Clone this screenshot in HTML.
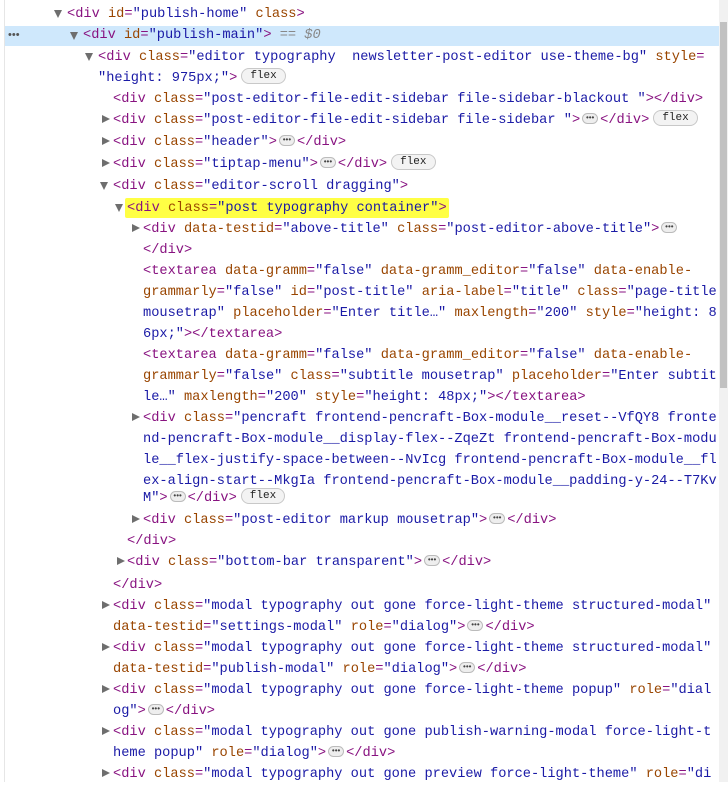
<!DOCTYPE html>
<html><head><meta charset="utf-8"><style>
body{margin:0;width:728px;height:782px;background:#fff;overflow:hidden;position:relative;font-family:"Liberation Mono",monospace;font-size:13.67px}
.l{position:absolute;height:21px;line-height:21px;white-space:pre;color:#881280}
.t{color:#881280}.a{color:#994500}.v{color:#1a1aa6}.g{color:#888;font-style:italic}
.tri{position:absolute;width:0;height:0;border-left:4.5px solid transparent;border-right:4.5px solid transparent;border-top:8px solid #6e6e6e}
.trr{position:absolute;width:0;height:0;border-top:4.5px solid transparent;border-bottom:4.5px solid transparent;border-left:8px solid #6e6e6e}
.dots{display:inline-block;width:16px;height:11px;border:1px solid #bbb;border-radius:7px;background:#eee;vertical-align:middle;margin:0 2px;position:relative;top:-1px;font-family:"Liberation Sans",sans-serif;font-size:8px;line-height:8px;text-align:center;color:#444;box-sizing:border-box}
.fx{display:inline-block;height:16px;line-height:14px;padding:0 8px;border:1px solid #c8c8c8;border-radius:8px;background:#f3f3f3;color:#222;font-family:"Liberation Mono",monospace;font-size:11px;vertical-align:middle;margin-left:4px;position:relative;top:-1px;box-sizing:border-box}
</style></head><body>
<div style="position:absolute;left:0;top:0;width:4px;height:782px;border-right:1px solid #e6e6e6"></div>
<div style="position:absolute;left:5px;top:26px;width:714px;height:20px;background:#cfe8fc"></div>
<div style="position:absolute;left:8px;top:26px;line-height:18px;color:#555;font-family:'Liberation Sans',sans-serif;font-size:11px">•••</div>
<div style="position:absolute;left:719px;top:0;width:9px;height:782px;background:#f1f1f1"></div>
<div style="position:absolute;left:720px;top:22px;width:7px;height:366px;background:#c1c1c1"></div>
<div style="position:absolute;left:125px;top:198px;width:324px;height:20px;background:#ffff44;border-radius:2px"></div>

<div class="tri" style="left:54px;top:10px"></div>
<div class="l" style="left:67px;top:4px">&lt;div <span class="a">id</span>=<span class="v">"publish-home"</span> <span class="a">class</span>&gt;</div>
<div class="tri" style="left:70px;top:32px"></div>
<div class="l" style="left:83px;top:25px">&lt;div <span class="a">id</span>=<span class="v">"publish-main"</span>&gt; <span class="g">== $0</span></div>
<div class="tri" style="left:85px;top:53px"></div>
<div class="l" style="left:98px;top:47px">&lt;div <span class="a">class</span>=<span class="v">"editor typography  newsletter-post-editor use-theme-bg"</span> <span class="a">style</span>=</div>
<div class="l" style="left:98px;top:68px"><span class="v">"height: 975px;"</span>&gt;<span class="fx">flex</span></div>
<div class="l" style="left:113px;top:89px">&lt;div <span class="a">class</span>=<span class="v">"post-editor-file-edit-sidebar file-sidebar-blackout "</span>&gt;&lt;/div&gt;</div>
<div class="trr" style="left:102px;top:115px"></div>
<div class="l" style="left:113px;top:110px">&lt;div <span class="a">class</span>=<span class="v">"post-editor-file-edit-sidebar file-sidebar "</span>&gt;<span class="dots">•••</span>&lt;/div&gt;<span class="fx">flex</span></div>
<div class="trr" style="left:102px;top:137px"></div>
<div class="l" style="left:113px;top:132px">&lt;div <span class="a">class</span>=<span class="v">"header"</span>&gt;<span class="dots">•••</span>&lt;/div&gt;</div>
<div class="trr" style="left:102px;top:159px"></div>
<div class="l" style="left:113px;top:154px">&lt;div <span class="a">class</span>=<span class="v">"tiptap-menu"</span>&gt;<span class="dots">•••</span>&lt;/div&gt;<span class="fx">flex</span></div>
<div class="tri" style="left:100px;top:182px"></div>
<div class="l" style="left:113px;top:176px">&lt;div <span class="a">class</span>=<span class="v">"editor-scroll dragging"</span>&gt;</div>
<div class="tri" style="left:115px;top:204px"></div>
<div class="l" style="left:127px;top:198px">&lt;div <span class="a">class</span>=<span class="v">"post typography container"</span>&gt;</div>
<div class="trr" style="left:132px;top:224px"></div>
<div class="l" style="left:143px;top:219px">&lt;div <span class="a">data-testid</span>=<span class="v">"above-title"</span> <span class="a">class</span>=<span class="v">"post-editor-above-title"</span>&gt;<span class="dots">•••</span></div>
<div class="l" style="left:143px;top:240px">&lt;/div&gt;</div>
<div class="l" style="left:143px;top:261px">&lt;textarea <span class="a">data-gramm</span>=<span class="v">"false"</span> <span class="a">data-gramm_editor</span>=<span class="v">"false"</span> <span class="a">data-enable-</span></div>
<div class="l" style="left:143px;top:282px"><span class="a">grammarly</span>=<span class="v">"false"</span> <span class="a">id</span>=<span class="v">"post-title"</span> <span class="a">aria-label</span>=<span class="v">"title"</span> <span class="a">class</span>=<span class="v">"page-title</span></div>
<div class="l" style="left:143px;top:303px"><span class="v">mousetrap"</span> <span class="a">placeholder</span>=<span class="v">"Enter title…"</span> <span class="a">maxlength</span>=<span class="v">"200"</span> <span class="a">style</span>=<span class="v">"height: 8</span></div>
<div class="l" style="left:143px;top:324px"><span class="v">6px;"</span>&gt;&lt;/textarea&gt;</div>
<div class="l" style="left:143px;top:345px">&lt;textarea <span class="a">data-gramm</span>=<span class="v">"false"</span> <span class="a">data-gramm_editor</span>=<span class="v">"false"</span> <span class="a">data-enable-</span></div>
<div class="l" style="left:143px;top:366px"><span class="a">grammarly</span>=<span class="v">"false"</span> <span class="a">class</span>=<span class="v">"subtitle mousetrap"</span> <span class="a">placeholder</span>=<span class="v">"Enter subtit</span></div>
<div class="l" style="left:143px;top:387px"><span class="v">le…"</span> <span class="a">maxlength</span>=<span class="v">"200"</span> <span class="a">style</span>=<span class="v">"height: 48px;"</span>&gt;&lt;/textarea&gt;</div>
<div class="trr" style="left:132px;top:413px"></div>
<div class="l" style="left:143px;top:408px">&lt;div <span class="a">class</span>=<span class="v">"pencraft frontend-pencraft-Box-module__reset--VfQY8 fronte</span></div>
<div class="l" style="left:143px;top:429px"><span class="v">nd-pencraft-Box-module__display-flex--ZqeZt frontend-pencraft-Box-modu</span></div>
<div class="l" style="left:143px;top:450px"><span class="v">le__flex-justify-space-between--NvIcg frontend-pencraft-Box-module__fl</span></div>
<div class="l" style="left:143px;top:471px"><span class="v">ex-align-start--MkgIa frontend-pencraft-Box-module__padding-y-24--T7Kv</span></div>
<div class="l" style="left:143px;top:488px"><span class="v">M"</span>&gt;<span class="dots">•••</span>&lt;/div&gt;<span class="fx">flex</span></div>
<div class="trr" style="left:132px;top:515px"></div>
<div class="l" style="left:143px;top:510px">&lt;div <span class="a">class</span>=<span class="v">"post-editor markup mousetrap"</span>&gt;<span class="dots">•••</span>&lt;/div&gt;</div>
<div class="l" style="left:127px;top:531px">&lt;/div&gt;</div>
<div class="trr" style="left:117px;top:557px"></div>
<div class="l" style="left:127px;top:552px">&lt;div <span class="a">class</span>=<span class="v">"bottom-bar transparent"</span>&gt;<span class="dots">•••</span>&lt;/div&gt;</div>
<div class="l" style="left:113px;top:575px">&lt;/div&gt;</div>
<div class="trr" style="left:102px;top:601px"></div>
<div class="l" style="left:113px;top:596px">&lt;div <span class="a">class</span>=<span class="v">"modal typography out gone force-light-theme structured-modal"</span></div>
<div class="l" style="left:113px;top:617px"><span class="a">data-testid</span>=<span class="v">"settings-modal"</span> <span class="a">role</span>=<span class="v">"dialog"</span>&gt;<span class="dots">•••</span>&lt;/div&gt;</div>
<div class="trr" style="left:102px;top:643px"></div>
<div class="l" style="left:113px;top:638px">&lt;div <span class="a">class</span>=<span class="v">"modal typography out gone force-light-theme structured-modal"</span></div>
<div class="l" style="left:113px;top:659px"><span class="a">data-testid</span>=<span class="v">"publish-modal"</span> <span class="a">role</span>=<span class="v">"dialog"</span>&gt;<span class="dots">•••</span>&lt;/div&gt;</div>
<div class="trr" style="left:102px;top:685px"></div>
<div class="l" style="left:113px;top:680px">&lt;div <span class="a">class</span>=<span class="v">"modal typography out gone force-light-theme popup"</span> <span class="a">role</span>=<span class="v">"dial</span></div>
<div class="l" style="left:113px;top:701px"><span class="v">og"</span>&gt;<span class="dots">•••</span>&lt;/div&gt;</div>
<div class="trr" style="left:102px;top:727px"></div>
<div class="l" style="left:113px;top:722px">&lt;div <span class="a">class</span>=<span class="v">"modal typography out gone publish-warning-modal force-light-t</span></div>
<div class="l" style="left:113px;top:743px"><span class="v">heme popup"</span> <span class="a">role</span>=<span class="v">"dialog"</span>&gt;<span class="dots">•••</span>&lt;/div&gt;</div>
<div class="trr" style="left:102px;top:769px"></div>
<div class="l" style="left:113px;top:764px">&lt;div <span class="a">class</span>=<span class="v">"modal typography out gone preview force-light-theme"</span> <span class="a">role</span>=<span class="v">"di</span></div>
</body></html>
